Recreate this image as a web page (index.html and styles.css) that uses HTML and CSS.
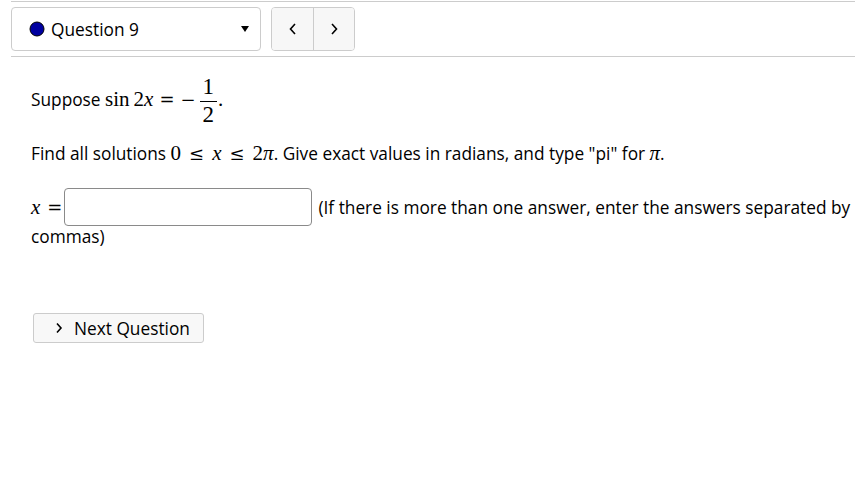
FILE: index.html
```html
<!DOCTYPE html>
<html>
<head>
<meta charset="utf-8">
<link rel="stylesheet" href="styles.css">
</head>
<body>
<div class="nav">
  <div class="select">
    <svg class="dot" width="16" height="16" viewBox="0 0 16 16"><circle cx="8" cy="8" r="7" fill="#0000a0" stroke="#000" stroke-width="1"/></svg>
    <span class="qlabel">Question 9</span>
    <svg class="caret" width="8" height="6" viewBox="0 0 8 6"><polygon points="0,0 8,0 4,6" fill="#000"/></svg>
  </div>
  <div class="btngroup">
    <button class="navbtn"><svg width="8" height="12" viewBox="0 0 8 12"><polyline points="6,1 1.5,6 6,11" fill="none" stroke="#000" stroke-width="1.6"/></svg></button>
    <button class="navbtn"><svg width="8" height="12" viewBox="0 0 8 12"><polyline points="2,1 6.5,6 2,11" fill="none" stroke="#000" stroke-width="1.6"/></svg></button>
  </div>
</div>
<div class="content">
  <p class="line1">Suppose <span class="m"><span class="fn">sin</span><span class="rm">2</span><i>x</i><span class="rel">=</span><span class="bin">−</span><span class="frac"><span class="num">1</span><span class="den">2</span></span><span class="rm">.</span></span></p>
  <p class="line2">Find all solutions <span class="m"><span class="rm">0</span><span class="rel wide">≤</span><i>x</i><span class="rel wide">≤</span><span class="rm">2</span><i>π</i></span>. Give exact values in radians, and type "pi" for <span class="m"><i>π</i></span>.</p>
  <div class="answer"><span class="m"><i>x</i><span class="rel eq">=</span></span><input class="ans" type="text"><span class="hint">(If there is more than one answer, enter the answers separated by</span></div>
  <p class="line3">commas)</p>
  <button class="next"><svg width="8" height="12" viewBox="0 0 8 12"><polyline points="2,1.5 6,6 2,10.5" fill="none" stroke="#000" stroke-width="1.6"/></svg><span>Next Question</span></button>
</div>
</body>
</html>
```
FILE: styles.css
```css
body {
  margin: 0;
  font-family: "Open Sans", "DejaVu Sans", sans-serif;
  font-size: 17.3px;
  color: #000;
  background: #fff;
}
.nav {
  margin: 1px 0 0 11px;
  border-top: 1px solid #cccccc;
  border-bottom: 1px solid #cccccc;
  padding: 5px 0 5px 0;
  display: flex;
  gap: 10px;
}
.select {
  box-sizing: border-box;
  width: 250px;
  height: 44px;
  border: 1px solid #cccccc;
  border-radius: 4px;
  display: flex;
  align-items: center;
  padding: 0 11px 0 17px;
  background: #fff;
}
.dot { flex: none; }
.qlabel { margin-left: 6px; flex: 1; }
.caret { flex: none; }
.btngroup {
  display: flex;
  border: 1px solid #cccccc;
  border-radius: 4px;
  overflow: hidden;
  height: 44px;
  box-sizing: border-box;
}
.navbtn {
  width: 41px;
  border: 0;
  background: #f7f7f7;
  padding: 0;
  display: flex;
  align-items: center;
  justify-content: center;
}
.navbtn + .navbtn { border-left: 1px solid #cccccc; }
.content {
  padding-left: 31px;
}
.m {
  font-family: "Liberation Serif", "DejaVu Serif", serif;
  font-size: 21px;
}
.m i { font-style: italic; }
.fn { margin-right: 4px; }
.rel, .bin {
  font-family: "DejaVu Serif", "Liberation Serif", serif;
  font-size: 18px;
}
.rel { margin: 0 6px; }
.rel.wide { margin: 0 8px; }
.bin { margin: 0 2px 0 0; }
.frac {
  display: inline-flex;
  flex-direction: column;
  align-items: center;
  vertical-align: 12px;
  font-size: 23px;
  margin: 0 1px 0 2px;
}
.num {
  padding: 0 3px 4px 3px;
  border-bottom: 1px solid #000;
  line-height: 20px;
}
.den { line-height: 20px; padding-top: 3px; }
.line1 { margin: 20px 0 0 0; line-height: 22px; }
.line2 { margin: 17px 0 0 0; line-height: 22px; }
.answer {
  margin-top: 23px;
  display: flex;
  align-items: center;
}
.eq { margin: 0 2px 0 7px; }
.ans {
  box-sizing: border-box;
  width: 248px;
  height: 38px;
  border: 1px solid #8a8a8a;
  border-radius: 4px;
  margin: 0 6px 0 0;
  padding: 0 4px;
}
.hint { white-space: nowrap; }
.line3 { margin: 0; line-height: 22px; }
.next {
  margin: 65px 0 0 2px;
  box-sizing: border-box;
  width: 171px;
  height: 30px;
  border: 1px solid #cccccc;
  border-radius: 3px;
  background: #f8f8f8;
  font-family: "Open Sans", "DejaVu Sans", sans-serif;
  font-size: 17.3px;
  display: flex;
  align-items: center;
  padding: 0 0 0 21px;
  gap: 11px;
  color: #000;
}
```
